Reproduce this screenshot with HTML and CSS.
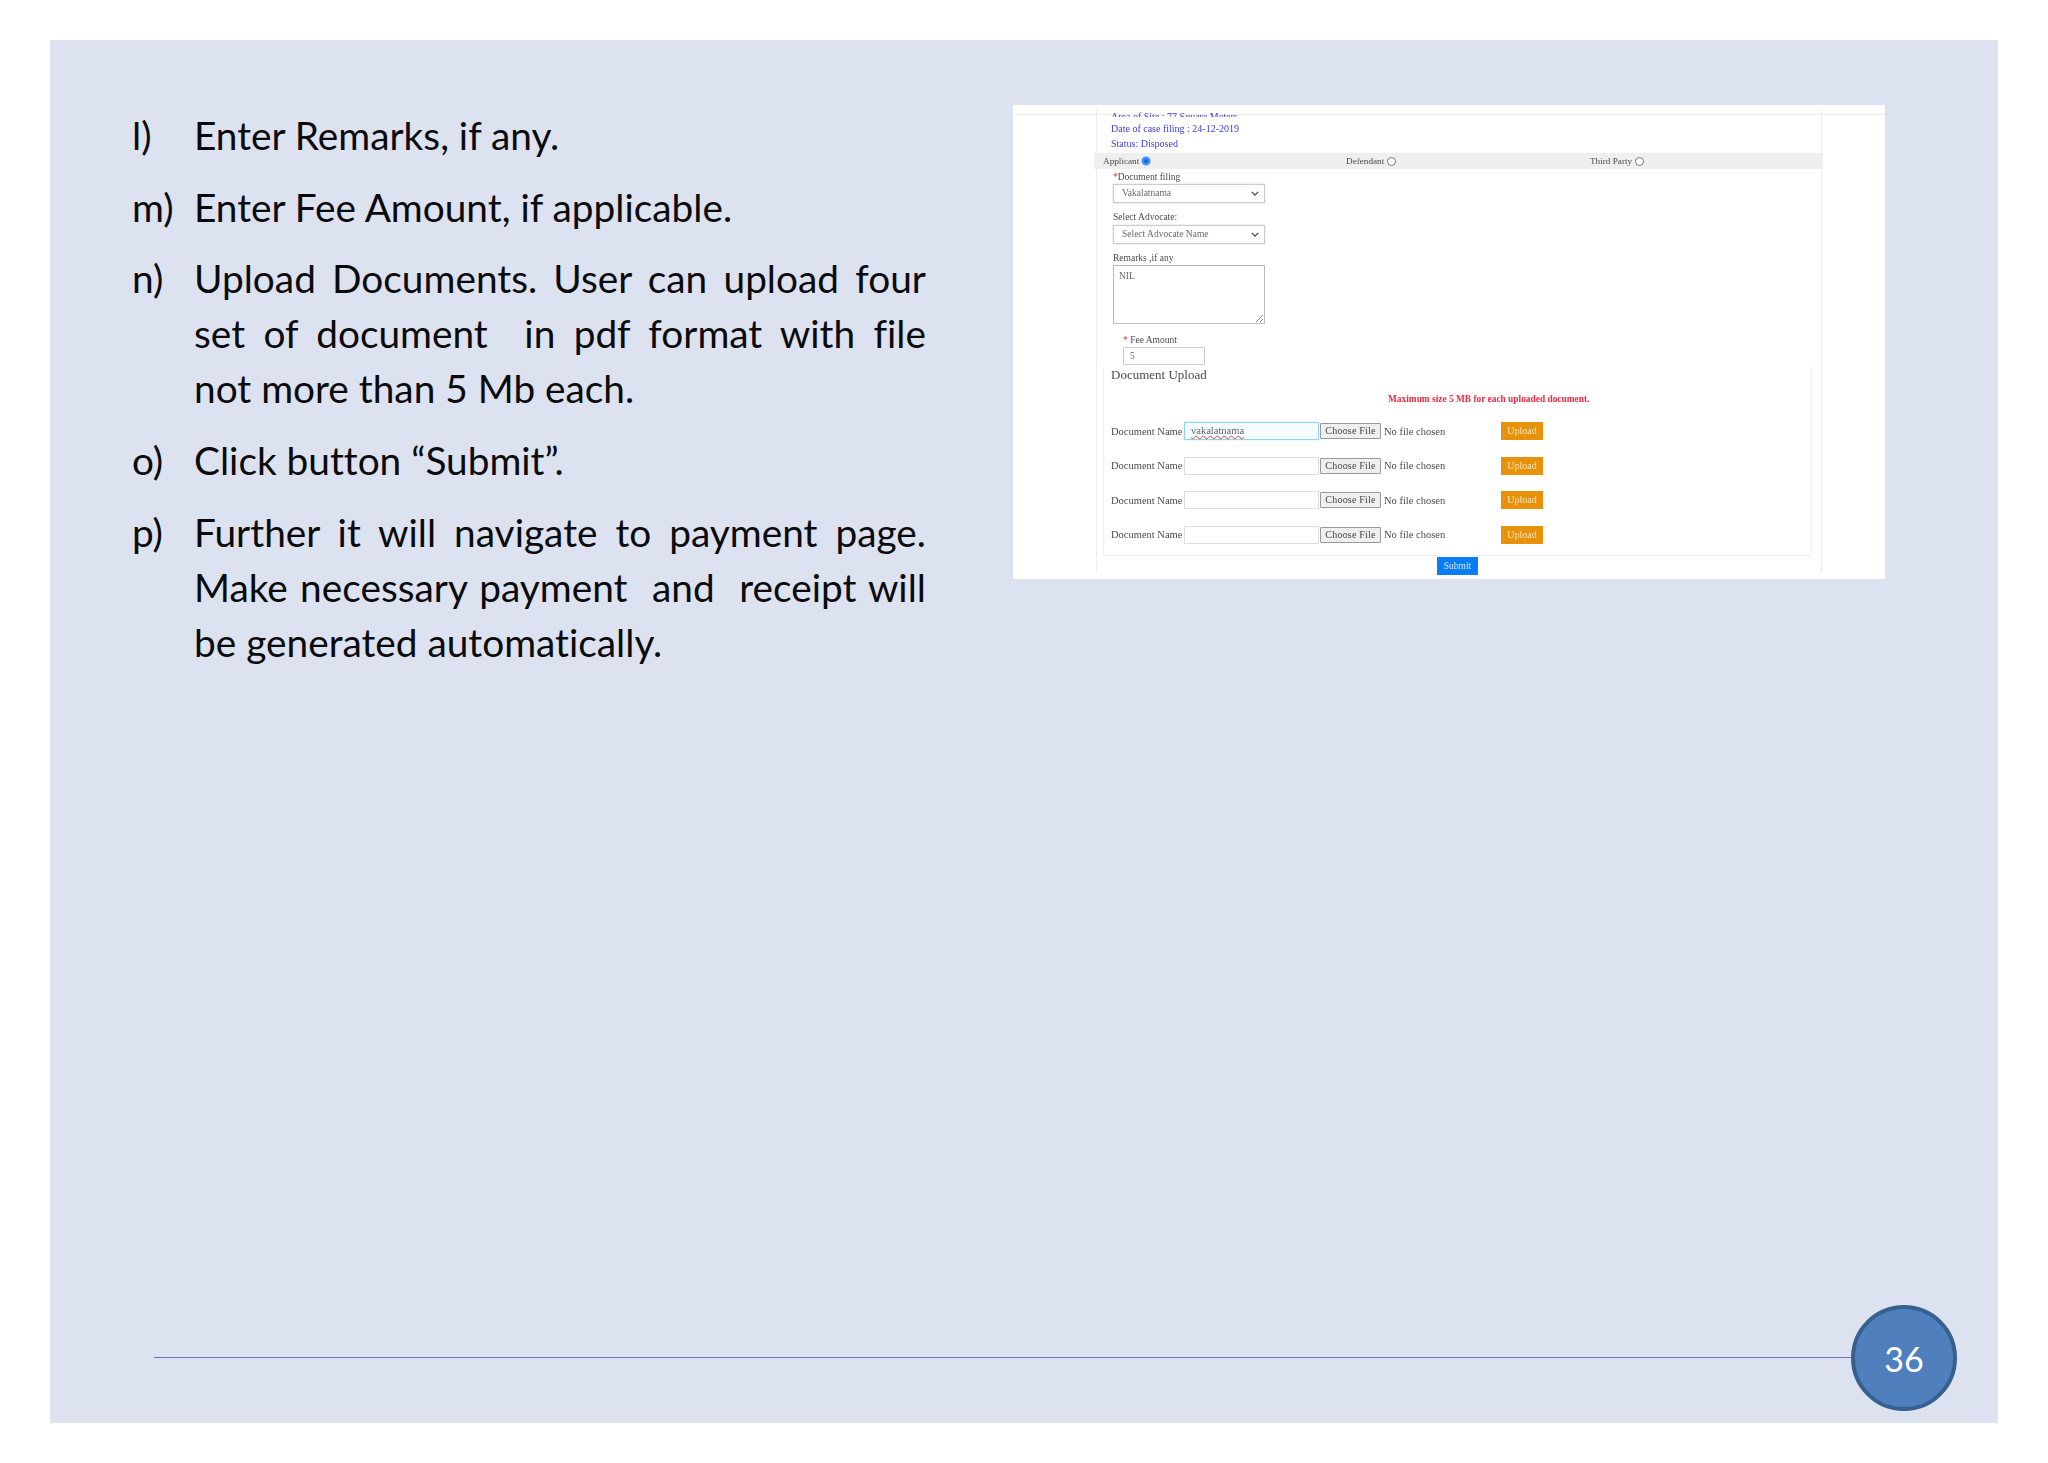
FILE: index.html
```html
<!DOCTYPE html>
<html lang="en">
<head>
<meta charset="utf-8">
<title>Slide 36</title>
<link rel="stylesheet" href="styles.css">
</head>
<body>
<main class="slide">
  <div class="content">
    <ol class="steps">
      <li class="step"><span class="mark">l)</span><p class="step-text">Enter Remarks, if any.</p></li>
      <li class="step"><span class="mark">m)</span><p class="step-text">Enter Fee Amount, if applicable.</p></li>
      <li class="step"><span class="mark">n)</span><p class="step-text"><span class="line">Upload Documents. User can upload four</span><span class="line">set of document &nbsp;in pdf format with file</span>not more than 5 Mb each.</p></li>
      <li class="step"><span class="mark">o)</span><p class="step-text">Click button “Submit”.</p></li>
      <li class="step"><span class="mark">p)</span><p class="step-text"><span class="line">Further it will navigate to payment page.</span><span class="line">Make necessary payment &nbsp;and &nbsp;receipt will</span>be generated automatically.</p></li>
    </ol>
    <figure class="shot">
      <div class="shot-top"></div>
      <div class="shot-frame">
        <div class="case-info">
          <div class="cut">Area of Site : 77 Square Meters</div>
          <div>Date of case filing : 24-12-2019</div>
          <div>Status: Disposed</div>
        </div>
        <div class="party-bar">
          <span class="party">Applicant <i class="radio on"></i></span>
          <span class="party">Defendant <i class="radio"></i></span>
          <span class="party">Third Party <i class="radio"></i></span>
        </div>
        <div class="fields">
          <div class="lab first"><b class="req">*</b>Document filing</div>
          <div class="select">Vakalatnama<svg class="chev" viewBox="0 0 10 6"><path d="M1 1l4 4 4-4" fill="none" stroke="#444" stroke-width="1.6"/></svg></div>
          <div class="lab">Select Advocate:</div>
          <div class="select">Select Advocate Name<svg class="chev" viewBox="0 0 10 6"><path d="M1 1l4 4 4-4" fill="none" stroke="#444" stroke-width="1.6"/></svg></div>
          <div class="lab">Remarks ,if any</div>
          <div class="textarea">NIL<svg class="grip" viewBox="0 0 8 8"><path d="M1 8l7-7M5 8l3-3" stroke="#888" stroke-width="1"/></svg></div>
          <div class="fee">
            <div class="lab"><b class="req">*</b> Fee Amount</div>
            <div class="fee-input">5</div>
          </div>
        </div>
        <section class="upload">
          <h3 class="legend">Document Upload</h3>
          <div class="notice">Maximum size 5 MB for each uploaded document.</div>
          <div class="doc-row"><span class="doc-lab">Document Name</span><span class="doc-input active"><u class="typed">vakalatnama</u></span><span class="choose">Choose File</span><span class="nofile">No file chosen</span><span class="up">Upload</span></div>
          <div class="doc-row"><span class="doc-lab">Document Name</span><span class="doc-input"></span><span class="choose">Choose File</span><span class="nofile">No file chosen</span><span class="up">Upload</span></div>
          <div class="doc-row"><span class="doc-lab">Document Name</span><span class="doc-input"></span><span class="choose">Choose File</span><span class="nofile">No file chosen</span><span class="up">Upload</span></div>
          <div class="doc-row"><span class="doc-lab">Document Name</span><span class="doc-input"></span><span class="choose">Choose File</span><span class="nofile">No file chosen</span><span class="up">Upload</span></div>
        </section>
        <div class="submit-wrap"><span class="submit">Submit</span></div>
      </div>
    </figure>
  </div>
  <footer class="foot">
    <div class="rule"></div>
    <div class="page-num">36</div>
  </footer>
</main>
</body>
</html>
```

FILE: styles.css
```css
* { box-sizing: border-box; }
html, body { margin: 0; padding: 0; background: #fff; }
body { width: 2048px; height: 1463px; padding: 40px 50px; font-family: "Lato", "Open Sans", sans-serif; }

.slide {
  width: 1948px;
  height: 1383px;
  background: #dde2f0;
  display: flex;
  flex-direction: column;
  justify-content: space-between;
  padding: 65px 0 12px;
}
.content { display: flex; align-items: flex-start; padding-left: 82px; }

.steps { list-style: none; margin: 3px 0 0; padding: 0; width: 794px; flex: none; font-size: 38.8px; line-height: 55px; color: #0b0b0b; font-variant-ligatures: none; }
.step { display: flex; margin-bottom: 16.7px; }
.mark { width: 62px; flex: none; }
.step-text { margin: 0; flex: 1; }
.line { display: block; text-align: justify; text-align-last: justify; }

.shot {
  margin: 0 0 0 87px;
  width: 872px;
  height: 474px;
  flex: none;
  background: #fff;
  overflow: hidden;
  font-family: "Liberation Serif", serif;
  filter: blur(0.45px);
  color: #4a4a4a;
  font-size: 9.5px;
  position: relative;
}
.shot-top { height: 10px; border-bottom: 1px solid #ececec; }
.shot-frame { margin-left: 83px; width: 726px; border-left: 1px solid #eee; border-right: 1px solid #eee; height: 463px; }

.case-info { padding: 0 0 0 14px; color: #3a3de0; font-size: 10px; line-height: 14.5px; height: 44px; margin-top: -6px; }
.cut { height: 8px; overflow: hidden; line-height: 3px; margin-top: 0; padding-top: 6px; }
.case-info .cut + div { margin-top: 5px; }

.party-bar { display: grid; grid-template-columns: 243px 244px 1fr; margin-left: -3px; width: 729px; height: 16px; padding-left: 9px; background: #efefef; line-height: 16px; color: #4a4a4a; align-items: center; }
.party { display: flex; align-items: center; gap: 3px; font-size: 9.2px; }
.radio { width: 9px; height: 9px; border-radius: 50%; border: 1px solid #777; background: #fff; flex: none; }
.radio.on { width: 8px; height: 8px; border: 2px solid #3e8ef7; background: #1a66d6; box-shadow: 0 0 0 1px #9cc5fa; }

.fields { padding-left: 16px; }
.lab { font-size: 9.5px; line-height: 12px; color: #4a4a4a; }
.first { margin-top: 2px; }
.first + .select { margin-top: 1px; }
.req { color: #e33; font-weight: 400; }
.select { width: 152px; height: 19px; margin: 2px 0 8px; border: 1px solid #ccc; box-shadow: 0 0 1px #aaa; padding-left: 8px; line-height: 17px; color: #6a6a6a; display: flex; justify-content: space-between; align-items: center; padding-right: 5px; }
.chev { width: 8px; height: 5px; }
.textarea { width: 152px; height: 59px; margin-top: 1px; border: 1px solid #bbb; padding: 4px 5px; line-height: 12px; color: #666; position: relative; }
.grip { position: absolute; right: 1px; bottom: 1px; width: 8px; height: 8px; }
.fee { padding: 10px 0 0 10px; }
.fee-input { width: 82px; height: 18px; margin-top: 1px; border: 1px solid #ccc; line-height: 16px; padding-left: 6px; color: #666; }

.upload { margin: 1px 9px 0 6px; height: 190px; border: 1px solid #f0f0f0; border-top: 0; padding: 0 0 0 7px; }
.legend { margin: 0; font-weight: 400; font-size: 13px; line-height: 18px; color: #4a4a4a; }
.notice { margin: 9px 0 17px 277px; font-size: 9.4px; font-weight: 700; line-height: 12px; color: #f02840; white-space: nowrap; }
.doc-row { display: flex; align-items: center; height: 18px; margin-bottom: 16.5px; white-space: nowrap; font-size: 10.5px; }
.doc-lab { width: 73px; flex: none; }
.doc-input { width: 135px; height: 18px; flex: none; border: 1px solid #ddd; padding-left: 6px; line-height: 16px; color: #666; }
.doc-input.active { border-color: #8fd4f4; background: #f4fafd; box-shadow: 0 0 1px #8fd4f4; }
.typed { text-decoration: underline wavy #e04040 1px; }
.choose { width: 61px; height: 16px; flex: none; margin-left: 1px; background: #efefef; border: 1px solid #999; border-radius: 1px; text-align: center; line-height: 14px; color: #444; font-size: 10px; letter-spacing: 0.2px; }
.nofile { width: 120px; flex: none; padding-left: 3px; }
.up { width: 42px; height: 18px; flex: none; background: #e8920c; color: #fbe6c4; text-align: center; line-height: 18px; font-size: 10px; }

.submit-wrap { display: flex; padding-left: 340px; margin-top: 1px; }
.submit { width: 41px; height: 18px; background: #0a7cf5; color: #d8e9ff; text-align: center; line-height: 18px; font-size: 9.5px; }

.foot { display: flex; align-items: center; padding: 0 41px 0 104px; }
.rule { flex: 1; height: 1px; margin-top: -2px; background: #6f6fb4; }
.page-num {
  width: 106px;
  height: 106px;
  flex: none;
  border-radius: 50%;
  background: #4f7fbd;
  border: 4px solid #36608f;
  color: #fff;
  display: flex;
  align-items: center;
  justify-content: center;
  font-size: 34px;
}
```
